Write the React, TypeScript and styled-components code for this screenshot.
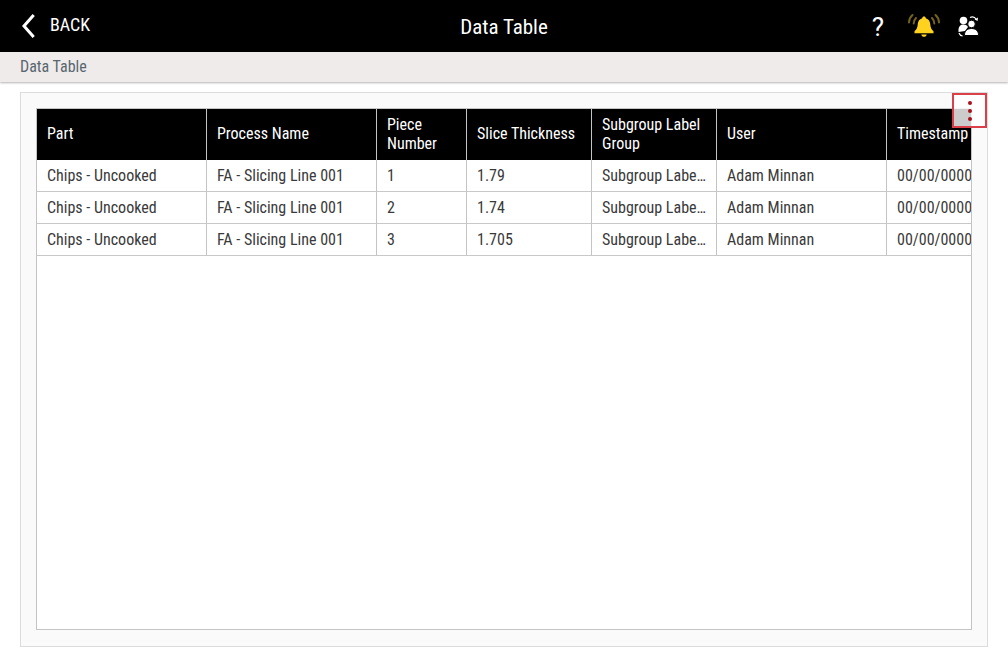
import React from "react";
import styled, { createGlobalStyle } from "styled-components";

const GlobalStyle = createGlobalStyle`
  html, body {
    margin: 0;
    padding: 0;
    background: #fff;
    font-family: "Roboto", "Liberation Sans", sans-serif;
  }
`;

const Page = styled.div`
  width: 1008px;
  height: 648px;
  overflow: hidden;
  display: flex;
  flex-direction: column;
`;

const TopBar = styled.header`
  height: 52px;
  flex: none;
  background: #000;
  color: #fff;
  display: grid;
  grid-template-columns: 1fr auto 1fr;
  align-items: center;
`;

const BackLink = styled.div`
  display: flex;
  align-items: center;
  gap: 14px;
  padding-left: 22px;
`;

const Condensed = styled.span<{ $size: number }>`
  display: inline-block;
  font-size: ${(p) => p.$size}px;
  font-stretch: 75%;
`;

const BackLabel = styled(Condensed)`
  margin-top: -3px;
`;

const Title = styled(Condensed)`
  margin-top: 1px;
`;

const TopActions = styled.div`
  display: flex;
  align-items: center;
  justify-content: flex-end;
  gap: 16px;
  padding-right: 29px;
`;

const Help = styled.span`
  font-size: 26px;
  width: 16px;
  text-align: center;
  margin-right: 4px;
  margin-top: 1px;
`;

const Crumbs = styled.div`
  height: 30px;
  flex: none;
  box-sizing: border-box;
  background: #eeebea;
  box-shadow: 0 1px 2px rgba(0, 0, 0, 0.3);
  display: flex;
  align-items: center;
  padding: 0 0 2px 20px;
  color: #5a6670;
  position: relative;
`;

const Content = styled.main`
  flex: 1;
  padding: 10px 20px 1px;
  min-height: 0;
  min-width: 0;
  display: flex;
`;

const Panel = styled.section`
  flex: 1;
  min-width: 0;
  box-sizing: border-box;
  background: #fafafa;
  border: 1px solid #dcdcdc;
  padding: 15px 15px 16px;
  position: relative;
  display: flex;
`;

const TableBox = styled.div`
  flex: 1;
  min-width: 0;
  border: 1px solid #c4c4c4;
  background: #fff;
  overflow: hidden;
`;

const Table = styled.table`
  border-collapse: separate;
  border-spacing: 0;
  table-layout: fixed;
  width: 1020px;
`;

const HeadCell = styled.th`
  height: 51px;
  box-sizing: border-box;
  background: #000;
  color: #fff;
  font-weight: 450;
  font-size: 16px;
  font-stretch: 75%;
  line-height: 19px;
  text-align: left;
  padding: 0 10px 2px;
  border-right: 1px solid #c4c4c4;
`;

const Cell = styled.td`
  height: 32px;
  box-sizing: border-box;
  color: #3a3a3a;
  font-size: 16px;
  font-stretch: 75%;
  padding: 0 10px;
  border-right: 1px solid #c4c4c4;
  border-bottom: 1px solid #c8c8c8;
  white-space: nowrap;
  overflow: hidden;
  text-overflow: ellipsis;
`;

const MenuButton = styled.button`
  position: absolute;
  top: 0;
  right: 0;
  width: 35px;
  height: 35px;
  box-sizing: border-box;
  border: 2px solid #d9404a;
  background: rgba(255, 255, 255, 0.8);
  padding: 0;
  display: flex;
  flex-direction: column;
  align-items: center;
  justify-content: center;
  gap: 4px;
`;

const Dot = styled.i`
  width: 4px;
  height: 4px;
  border-radius: 50%;
  background: #a8101c;
`;

const columns = [
  { label: "Part", width: 170 },
  { label: "Process Name", width: 170 },
  { label: "Piece Number", width: 90 },
  { label: "Slice Thickness", width: 125 },
  { label: "Subgroup Label Group", width: 125 },
  { label: "User", width: 170 },
  { label: "Timestamp", width: 170 },
];

const rows = [
  ["Chips - Uncooked", "FA - Slicing Line 001", "1", "1.79", "Subgroup Label 1", "Adam Minnan", "00/00/0000 00:00"],
  ["Chips - Uncooked", "FA - Slicing Line 001", "2", "1.74", "Subgroup Label 1", "Adam Minnan", "00/00/0000 00:00"],
  ["Chips - Uncooked", "FA - Slicing Line 001", "3", "1.705", "Subgroup Label 1", "Adam Minnan", "00/00/0000 00:00"],
];

const BackIcon = () => (
  <svg width="14" height="26" viewBox="0 0 14 26" fill="none">
    <path d="M11.700 2 L2 13 L11.700 24" stroke="#fff" strokeWidth="3" />
  </svg>
);

const BellIcon = () => (
  <svg width="36" height="26" viewBox="0 0 36 26" fill="none">
    <path d="M18 3.500c1 0 1.700.7 1.800 1.700 3 .8 4.300 3.300 4.500 6.300.2 2.800.9 5 3.200 6.700v2H8.500v-2c2.300-1.700 3-3.900 3.200-6.700.2-3 1.500-5.500 4.500-6.300.1-1 .8-1.700 1.800-1.700z" fill="#ffd21f" />
    <path d="M15.300 21.500h5.400c-.3 1.400-1.300 2.300-2.700 2.300s-2.400-.9-2.700-2.300z" fill="#ffd21f" />
    <g stroke="#75631c" strokeWidth="2" strokeLinecap="round">
      <path d="M10 5c-1.500 1.500-2.300 3.300-2.300 5.500" />
      <path d="M6.500 2C4.300 4 3 6.500 3 9.500" />
      <path d="M26 5c1.500 1.500 2.300 3.300 2.300 5.500" />
      <path d="M29.500 2c2.200 2 3.500 4.500 3.500 7.500" />
    </g>
  </svg>
);

const UsersIcon = () => (
  <svg width="21" height="22" viewBox="0 0 21 22" fill="#fff">
    <circle cx="5.500" cy="5.500" r="3.800" />
    <path d="M.5 15c0-3.500 2-5.500 5-5.500 2 0 3.500.8 4.500 2.500l-3 4-6.500 1z" />
    <circle cx="13.500" cy="9" r="3.800" stroke="#000" strokeWidth="1" />
    <path d="M6.500 20c0-4 2.800-6.500 7-6.500s7 2.500 7 6.500v.5h-14z" stroke="#000" strokeWidth="1" />
    <path d="M12 2.500c2.500-1 5-.2 6.300 2" stroke="#fff" strokeWidth="1.200" fill="none" />
    <path d="M20 2.500l-.4 3.500-3-1.500z" />
    <path d="M1 18c.5 1.500 1.700 2.700 3.600 3" stroke="#fff" strokeWidth="1.200" fill="none" />
  </svg>
);

export default function App() {
  return (
    <Page>
      <GlobalStyle />
      <TopBar>
        <BackLink>
          <BackIcon />
          <BackLabel $size={18}>BACK</BackLabel>
        </BackLink>
        <Title $size={21}>Data Table</Title>
        <TopActions>
          <Help>?</Help>
          <BellIcon />
          <UsersIcon />
        </TopActions>
      </TopBar>
      <Crumbs>
        <Condensed $size={16}>Data Table</Condensed>
      </Crumbs>
      <Content>
        <Panel>
          <TableBox>
            <Table>
              <colgroup>
                {columns.map((c) => (
                  <col key={c.label} style={{ width: c.width }} />
                ))}
              </colgroup>
              <thead>
                <tr>
                  {columns.map((c) => (
                    <HeadCell key={c.label}>{c.label}</HeadCell>
                  ))}
                </tr>
              </thead>
              <tbody>
                {rows.map((row) => (
                  <tr key={row[2]}>
                    {row.map((value, i) => (
                      <Cell key={i}>{value}</Cell>
                    ))}
                  </tr>
                ))}
              </tbody>
            </Table>
          </TableBox>
          <MenuButton aria-label="More">
            <Dot />
            <Dot />
            <Dot />
          </MenuButton>
        </Panel>
      </Content>
    </Page>
  );
}
